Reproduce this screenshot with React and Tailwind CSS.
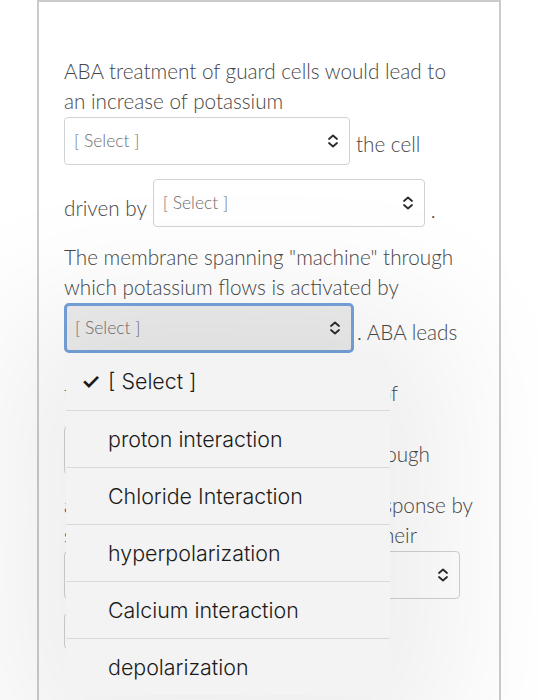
import React from "react";

const options = [
  "[ Select ]",
  "proton interaction",
  "Chloride Interaction",
  "hyperpolarization",
  "Calcium interaction",
  "depolarization",
];

const Chevron = () => (
  <svg width="12" height="14" viewBox="0 0 12 14" fill="none" stroke="#2b2b2b" strokeWidth="1.8" strokeLinecap="round" strokeLinejoin="round">
    <polyline points="2,5 6,1.5 10,5" />
    <polyline points="2,9 6,12.5 10,9" />
  </svg>
);

const SelectBox = ({ width, focused = false }) => (
  <div
    className={
      focused
        ? "flex h-[50px] items-center justify-between rounded-[5px] border-[3px] border-[#76a2da] bg-[#ededed] pl-[8px] pr-[10px]"
        : "flex h-[48px] items-center justify-between rounded-[4px] border border-[#cfd3d6] bg-white pl-[9px] pr-[10px]"
    }
    style={{ width }}
  >
    <span className="text-[17.5px] font-light text-[#6f6f6f]">[ Select ]</span>
    <Chevron />
  </div>
);

const Dropdown = () => (
  <div className="absolute left-[27px] top-[351px] w-[324px] overflow-hidden rounded-[14px] bg-[#f3f3f3] shadow-[0_10px_140px_60px_rgba(0,0,0,0.07)] font-['Inter',sans-serif] text-[21.4px] text-[#1b1b1b]">
    {options.map((o, i) => (
      <div
        key={o}
        className={
          "flex h-[57px] items-center " + (i > 0 ? "border-t border-[#dadada]" : "")
        }
      >
        <span className="w-[42px] pl-[15px] text-[22px] font-semibold">{i === 0 ? "✓" : ""}</span>
        <span>{o}</span>
      </div>
    ))}
  </div>
);

export default function App() {
  return (
    <div className="min-h-[700px] bg-white px-[37px] font-['Lato',sans-serif] text-[20.7px] font-light text-[#474747]">
      <div className="relative h-[720px] border-x-2 border-t-2 border-[#cbcbcb] pl-[25px] pr-[16px] pt-[54px]">
        <p className="leading-[30px]">
          ABA treatment of guard cells would lead to
          <br />
          an increase of potassium
        </p>
        <div className="mt-[1px] flex items-center gap-[6px]">
          <SelectBox width={286} />
          <span className="mt-[8px]">the cell</span>
        </div>
        <div className="mt-[14px] flex items-center gap-[6px]">
          <span className="mt-[12px]">driven by</span>
          <SelectBox width={272} />
          <span className="mt-[16px]">.</span>
        </div>
        <p className="mt-[15px] leading-[30px]">
          The membrane spanning "machine" through
          <br />
          which potassium flows is activated by
        </p>
        <div className="mt-[1px] flex items-center gap-[3px]">
          <SelectBox width={290} focused />
          <span className="mt-[10px]">. ABA leads</span>
        </div>
        <div className="mt-[25px] flex justify-between pr-[85px] leading-[30px]">
          <span>to an efflux</span>
          <span>of</span>
        </div>
        <div className="mt-[18px] flex items-center justify-between pr-[53px]">
          <SelectBox width={260} />
          <span className="mt-[10px]">through</span>
        </div>
        <div className="mt-[16px] flex justify-between pr-[10px] leading-[30px]">
          <span>a stomatal</span>
          <span>response by</span>
        </div>
        <div className="flex justify-between pr-[66px] leading-[30px]">
          <span>sensing</span>
          <span>their</span>
        </div>
        <div className="mt-[1px] flex items-center">
          <SelectBox width={396} />
        </div>
        <div className="mt-[14px] h-[36px] w-[200px] rounded-[4px] border border-[#cfd3d6]" />
        <Dropdown />
      </div>
    </div>
  );
}
